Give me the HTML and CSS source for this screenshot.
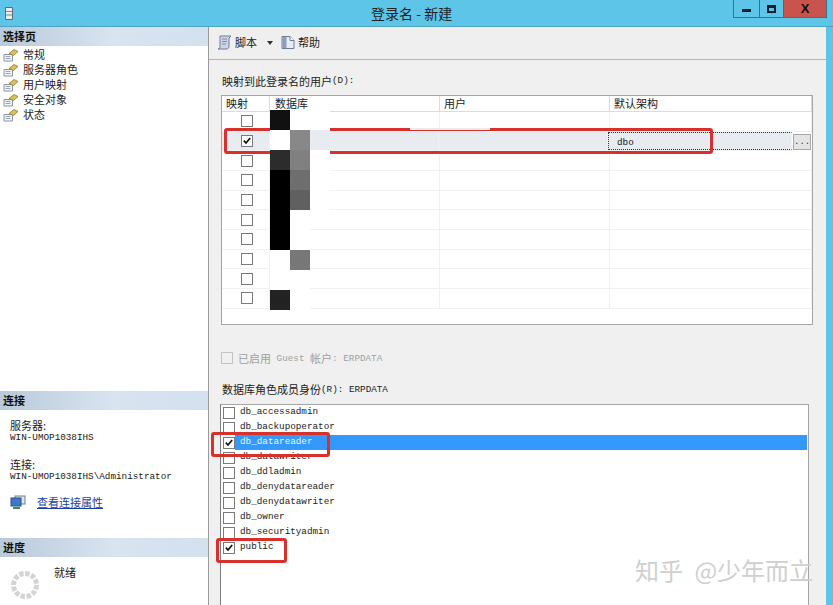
FILE: index.html
```html
<!DOCTYPE html>
<html lang="zh">
<head>
<meta charset="utf-8">
<title>登录名 - 新建</title>
<link rel="stylesheet" href="styles.css">
</head>
<body>
<svg class="defs" width="0" height="0" aria-hidden="true">
  <symbol id="page" viewBox="0 0 16 14">
    <path d="M1 6.5h8.5v6.5H1z" fill="#f4f5f8" stroke="#8a93a3"/>
    <path d="M2.5 8.5h5M2.5 10.5h5" stroke="#9aa3b2"/>
    <path d="M6 5.5 11 1.5l4 2-4.5 4z" fill="#d9c25a" stroke="#8c7a2c" stroke-width=".8"/>
  </symbol>
  <symbol id="check" viewBox="0 0 12 12">
    <path d="M2.2 6.2 4.8 9 9.8 3" fill="none" stroke="#111" stroke-width="2"/>
  </symbol>
</svg>
<div class="page">
  <header class="titlebar">
    <svg class="app-icon" width="8" height="13" viewBox="0 0 8 13"><path d="M.5.5h7v12h-7z" fill="#e9edf2" stroke="#5b6b78"/><path d="M1 4.5h6M1 8h6" stroke="#7c8a96"/></svg>
    <h1 class="title">登录名 - 新建</h1>
    <div class="winbtns">
      <div class="winbtn win-min"><span class="min-glyph"></span></div>
      <div class="winbtn win-max"><span class="max-glyph"></span></div>
      <div class="winbtn win-close">X</div>
    </div>
  </header>
  <div class="main">
    <aside class="side">
      <section class="sec sec-pages">
        <h2 class="sec-head">选择页</h2>
        <ul class="nav">
          <li class="nav-item"><svg class="nav-icon"><use href="#page"/></svg>常规</li>
          <li class="nav-item"><svg class="nav-icon"><use href="#page"/></svg>服务器角色</li>
          <li class="nav-item"><svg class="nav-icon"><use href="#page"/></svg>用户映射</li>
          <li class="nav-item"><svg class="nav-icon"><use href="#page"/></svg>安全对象</li>
          <li class="nav-item"><svg class="nav-icon"><use href="#page"/></svg>状态</li>
        </ul>
      </section>
      <section class="sec sec-conn">
        <h2 class="sec-head">连接</h2>
        <div class="conn-body">
          <div class="cjk">服务器:</div>
          <div class="mono">WIN-UMOP1038IHS</div>
          <div class="cjk conn-gap">连接:</div>
          <div class="mono">WIN-UMOP1038IHS\Administrator</div>
          <div class="conn-link">
            <svg width="16" height="14" viewBox="0 0 16 14"><rect x="5" y="1" width="10" height="8" fill="#dfe6ee" stroke="#6f7f92"/><rect x="1" y="3" width="10" height="8" fill="#3f78c8" stroke="#2b4f86"/><path d="M3 13h7" stroke="#3d8c4a" stroke-width="2"/></svg>
            <a class="link">查看连接属性</a>
          </div>
        </div>
      </section>
      <section class="sec sec-progress">
        <h2 class="sec-head">进度</h2>
        <div class="progress-body">
          <svg class="spinner" width="30" height="30" viewBox="0 0 30 30"><circle cx="15" cy="15" r="11.5" fill="none" stroke="#d4d4d4" stroke-width="5" stroke-dasharray="4.4 1.6"/></svg>
          <span class="cjk">就绪</span>
        </div>
      </section>
    </aside>
    <main class="content">
      <div class="toolbar">
        <svg width="17" height="15" viewBox="0 0 17 15"><path d="M4 1h11l-2 2v8c0 2-1 3-3 3H2c2 0 2-2 2-3z" fill="#cdd6e4" stroke="#6d7d98"/><path d="M6 4h5M6 6.500h5M6 9h4" stroke="#7d8ba5"/></svg>
        <span class="tool-label">脚本</span>
        <span class="caret"></span>
        <svg class="tool-help" width="15" height="15" viewBox="0 0 15 15"><path d="M1 1.500h8l4 4v8H1z" fill="#e8edf5" stroke="#6d7d98"/><path d="M1.500 2h4v11h-4z" fill="#8b9dbc"/><path d="M9 1.500v4h4" fill="#fff" stroke="#6d7d98"/></svg>
        <span class="tool-label">帮助</span>
      </div>
      <div class="form">
        <div class="form-label"><span class="cjk">映射到此登录名的用户</span><span class="mono">(D):</span></div>
        <div class="grid-box">
          <div class="grow ghead">
            <div class="c1">映射</div><div class="c2">数据库</div><div class="c3">用户</div><div class="c4">默认架构</div>
          </div>
          <div class="grow"><div class="c1"><span class="cb"></span></div><div class="c2"></div><div class="c3"></div><div class="c4"></div></div>
          <div class="grow grow-sel"><div class="c1"><span class="cb"><svg width="11" height="11"><use href="#check"/></svg></span></div><div class="c2"></div><div class="c3"></div><div class="c4 c4-sel"><span class="mono">dbo</span></div><div class="ell">...</div></div>
          <div class="grow"><div class="c1"><span class="cb"></span></div><div class="c2"></div><div class="c3"></div><div class="c4"></div></div>
          <div class="grow"><div class="c1"><span class="cb"></span></div><div class="c2"></div><div class="c3"></div><div class="c4"></div></div>
          <div class="grow"><div class="c1"><span class="cb"></span></div><div class="c2"></div><div class="c3"></div><div class="c4"></div></div>
          <div class="grow"><div class="c1"><span class="cb"></span></div><div class="c2"></div><div class="c3"></div><div class="c4"></div></div>
          <div class="grow"><div class="c1"><span class="cb"></span></div><div class="c2"></div><div class="c3"></div><div class="c4"></div></div>
          <div class="grow"><div class="c1"><span class="cb"></span></div><div class="c2"></div><div class="c3"></div><div class="c4"></div></div>
          <div class="grow"><div class="c1"><span class="cb"></span></div><div class="c2"></div><div class="c3"></div><div class="c4"></div></div>
          <div class="grow"><div class="c1"><span class="cb"></span></div><div class="c2"></div><div class="c3"></div><div class="c4"></div></div>
        </div>
        <div class="guest"><span class="cb cb-off"></span><span class="cjk">已启用</span><span class="mono"> Guest </span><span class="cjk">帐户</span><span class="mono">: ERPDATA</span></div>
        <div class="role-label"><span class="cjk">数据库角色成员身份</span><span class="mono">(R): ERPDATA</span></div>
        <div class="rolelist">
          <div class="role"><span class="cb"></span><span class="role-name">db_accessadmin</span></div>
          <div class="role"><span class="cb"></span><span class="role-name">db_backupoperator</span></div>
          <div class="role role-sel"><span class="cb"><svg width="11" height="11"><use href="#check"/></svg></span><span class="role-name">db_datareader</span></div>
          <div class="role"><span class="cb"></span><span class="role-name">db_datawriter</span></div>
          <div class="role"><span class="cb"></span><span class="role-name">db_ddladmin</span></div>
          <div class="role"><span class="cb"></span><span class="role-name">db_denydatareader</span></div>
          <div class="role"><span class="cb"></span><span class="role-name">db_denydatawriter</span></div>
          <div class="role"><span class="cb"></span><span class="role-name">db_owner</span></div>
          <div class="role"><span class="cb"></span><span class="role-name">db_securityadmin</span></div>
          <div class="role"><span class="cb"><svg width="11" height="11"><use href="#check"/></svg></span><span class="role-name">public</span></div>
        </div>
      </div>
    </main>
  </div>

  <div class="red red-a"></div>
  <div class="red-fade"></div>
  <div class="red red-b"></div>
  <div class="red red-c"></div>

  <div class="mosaic" aria-hidden="true">
    <i class="m-k1"></i><i class="m-w"></i><i class="m-w"></i>
    <i class="m-w"></i><i class="m-g1"></i><i class="m-s"></i>
    <i class="m-k2"></i><i class="m-g2"></i><i class="m-w"></i>
    <i class="m-k"></i><i class="m-g3"></i><i class="m-w"></i>
    <i class="m-k"></i><i class="m-g4"></i><i class="m-w"></i>
    <i class="m-k"></i><i class="m-w"></i><i></i>
    <i class="m-k"></i><i class="m-w"></i><i></i>
    <i class="m-w"></i><i class="m-g5"></i><i></i>
    <i class="m-w"></i><i class="m-w"></i><i></i>
    <i class="m-k3"></i><i class="m-w"></i><i></i>
  </div>

  <div class="watermark">知乎 @少年而立</div>
</div>
</body>
</html>
```
FILE: styles.css
```css
* { box-sizing: border-box; }
html, body { margin: 0; padding: 0; background: #5cc5e8; }
.defs { position: absolute; }
.page {
  position: relative;
  width: 833px;
  height: 605px;
  overflow: hidden;
  background: #5cc5e8;
  font-family: "Noto Sans CJK SC", "Liberation Sans", sans-serif;
  font-size: 11px;
  color: #1a1a1a;
}
.cjk { font-family: "Noto Sans CJK SC", sans-serif; font-size: 11px; line-height: 13px; }
.mono { font-family: "Liberation Mono", monospace; font-size: 9.3px; line-height: 11px; }

/* title bar */
.titlebar {
  height: 27px;
  display: flex;
  align-items: flex-start;
  position: relative;
  border-bottom: 1px solid #4fa3c2;
}
.app-icon { margin: 7px 0 0 5px; }
.title {
  position: absolute;
  left: 371px;
  top: 3px;
  margin: 0;
  font-size: 14px;
  line-height: 20px;
  font-weight: 400;
  color: #222;
}
.winbtns { margin-left: auto; margin-right: 6px; display: flex; height: 18px; }
.winbtn {
  border: 1px solid #3d7088;
  border-top: 0;
  display: flex;
  align-items: center;
  justify-content: center;
  height: 18px;
}
.win-min { width: 27px; }
.win-max { width: 24px; border-left: 0; }
.win-close {
  width: 43px;
  border-left: 0;
  background: #c9544e;
  font: 700 13px "Liberation Sans", sans-serif;
  color: #111;
}
.min-glyph { width: 9px; height: 3px; background: #10202c; margin-top: 3px; }
.max-glyph { width: 9px; height: 8px; border: 2px solid #10202c; border-top-width: 3px; }

/* main */
.main { display: flex; height: 578px; margin-right: 7px; }

/* sidebar */
.side { width: 209px; background: #fff; border-right: 1px solid #9a9a9a; display: flex; flex-direction: column; flex: none; }
.sec-head {
  margin: 0;
  height: 19px;
  padding-left: 3px;
  font-size: 11px;
  line-height: 19px;
  font-weight: 700;
  color: #111;
  background: linear-gradient(90deg, #b9cada 0%, #d8e4f0 55%, #d3e0ee 100%);
}
.sec-pages { height: 364px; }
.sec-conn { height: 147px; }
.sec-progress { flex: 1; }
.nav { margin: 0; padding: 1px 0 0 0; list-style: none; }
.nav-item { height: 15px; display: flex; align-items: center; line-height: 15px; color: #222; }
.nav-icon { width: 16px; height: 14px; margin: 0 4px 0 3px; }
.conn-body { padding: 8px 0 0 10px; }
.conn-body .cjk { line-height: 14px; }
.conn-body .conn-gap { margin-top: 14px; }
.conn-link { display: flex; align-items: center; margin-top: 12px; gap: 11px; }
.link { color: #1a3fa0; text-decoration: underline; }
.progress-body { display: flex; align-items: flex-start; padding: 12px 0 0 10px; }
.spinner { margin-top: 1px; }
.progress-body .cjk { margin-left: 14px; margin-top: -3px; }

/* content */
.content { flex: 1; background: #f0f0f0; display: flex; flex-direction: column; min-width: 0; overflow: hidden; }
.toolbar {
  height: 33px;
  flex: none;
  display: flex;
  align-items: center;
  padding: 0 0 2px 7px;
  border-bottom: 1px solid #b5b5b5;
  background: #efefef;
}
.tool-label { margin-left: 1px; color: #222; padding-left: 1px; }
.caret {
  margin: 1px 0 0 10px;
  border-left: 3.5px solid transparent;
  border-right: 3.5px solid transparent;
  border-top: 4px solid #333;
}
.tool-help { margin-left: 8px; }
.form { padding: 15px 0 0 12px; flex: 1; }
.form-label { height: 20px; line-height: 14px; padding-left: 1px; color: #222; display: flex; align-items: flex-start; white-space: pre; }
.grid-box {
  width: 592px;
  height: 230px;
  background: #fff;
  border: 1px solid #a5a5a5;
}
.grow { display: flex; height: 19.67px; border-bottom: 1px solid #f1f1f1; position: relative; }
.grow > div { border-right: 1px solid #f1f1f1; }
.ghead { height: 16px; line-height: 15px; border-bottom: 1px solid #dcdcdc; color: #222; }
.ghead > div { border-right: 1px solid #dcdcdc; padding-left: 4px; }
.ghead .c1 { justify-content: flex-start; }
.ghead .c2 { padding-left: 5px; }
.c1 { width: 48px; display: flex; align-items: center; justify-content: center; padding-left: 3px; }
.c2 { width: 170px; }
.c3 { width: 170px; }
.c4 { flex: 1; }
.grow-sel { background: #e8ebf0; margin-right: 20px; }
.c4-sel { border: 1px dotted #333; padding-left: 8px; line-height: 15px; flex: none; width: 184px; }
.grow .ell {
  position: absolute;
  right: -19px;
  top: 2px;
  width: 18px;
  height: 16px;
  background: #e4e4e4;
  border: 1px solid #a8a8a8;
  font: 9px/14px "Liberation Mono", monospace;
  text-align: center;
  color: #333;
}
.cb {
  width: 12px;
  height: 12px;
  flex: none;
  display: inline-flex;
  align-items: center;
  justify-content: center;
  background: #fff;
  border: 1px solid #7a7a7a;
}
.guest { display: flex; align-items: center; margin-top: 26px; height: 14px; white-space: pre; }
.guest .cb { border-color: #c4c4c4; background: #f0f0f0; margin-right: 5px; }
.guest .cjk, .guest .mono { color: #a0a0a0; }
.role-label { margin-top: 17px; height: 14px; line-height: 14px; padding-left: 1px; white-space: pre; display: flex; align-items: center; color: #222; }
.rolelist {
  margin-top: 8px;
  margin-left: -1px;
  width: 589px;
  height: 210px;
  background: #fff;
  border-left: 1px solid #7d7d7d;
  border-top: 1px solid #a5a5a5;
  border-right: 1px solid #a5a5a5;
}
.role { display: flex; align-items: center; height: 15px; padding-left: 2px; }
.role-name {
  font-family: "Liberation Mono", monospace;
  font-size: 9.3px;
  line-height: 14px;
  height: 15px;
  color: #222;
  padding-left: 5px;
  flex: 1;
}
.role-sel .role-name { background: #3399ff; color: #e8f4ff; margin-right: 1px; }

/* overlays: annotations drawn over the screenshot */
.red { position: absolute; border: 3px solid #d8302a; border-radius: 3px; }
.red-a { left: 224px; top: 128px; width: 489px; height: 26px; }
.red-b { left: 211px; top: 432px; width: 119px; height: 25px; }
.red-c { left: 216px; top: 538px; width: 71px; height: 25px; }
.red-fade { position: absolute; left: 410px; top: 128px; width: 80px; height: 1.500px; background: #f3e9e9; }
.mosaic {
  position: absolute;
  left: 270px;
  top: 110px;
  display: grid;
  grid-template-columns: repeat(3, 20px);
  grid-auto-rows: 20px;
}
.m-w { background: #fff; }
.m-s { background: #e8ebf0; }
.m-k { background: #000; }
.m-k1 { background: #111; }
.m-k2 { background: #2c2c2c; }
.m-k3 { background: #222; }
.m-g1 { background: #888; }
.m-g2 { background: #808080; }
.m-g3 { background: #6e6e6e; }
.m-g4 { background: #606060; }
.m-g5 { background: #777; }
.watermark {
  position: absolute;
  left: 635px;
  top: 556px;
  font-size: 24px;
  line-height: 28px;
  word-spacing: 6px;
  color: #cfcfcf;
  white-space: nowrap;
}
```
